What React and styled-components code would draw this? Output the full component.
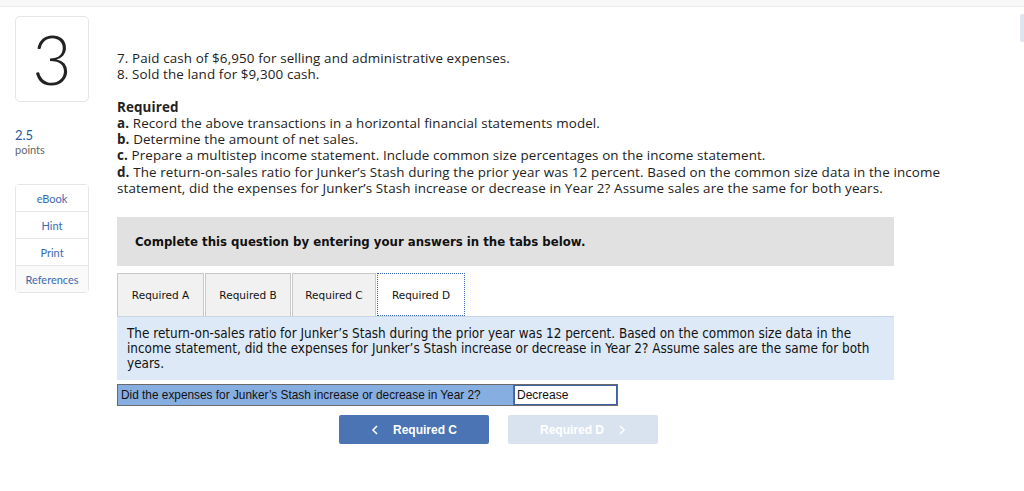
import styled, { createGlobalStyle } from "styled-components";

/* ===== GLOBAL ===== */

const Global = createGlobalStyle`
html, body{
margin:0;
padding:0;
background:#fff;
}
body{
font-family:Lato, "Open Sans", sans-serif;
color:#222;
}
`;

/* ===== PAGE ===== */

const TopStrip = styled.div`
height:6px;
background:#f8f8f8;
border-bottom:1px solid #ececec;
`;

const Page = styled.div`
display:flex;
align-items:flex-start;
padding:9px 0 0 15px;
position:relative;
`;

const ScrollThumb = styled.div`
position:absolute;
right:0;
top:7px;
width:4px;
height:28px;
background:#dfe5ef;
border-radius:2px 0 0 2px;
`;

/* ===== LEFT COLUMN ===== */

const Side = styled.div`
width:74px;
flex-shrink:0;
display:flex;
flex-direction:column;
`;

const NumberBox = styled.div`
height:84px;
border:1px solid #e6e6e6;
border-radius:5px;
display:flex;
align-items:center;
justify-content:center;
font-size:68px;
font-weight:300;
color:#222;
line-height:1;
`;

const Points = styled.div`
margin-top:26px;
font-size:13px;
color:#2a5a9b;
line-height:15px;
`;

const PointsLabel = styled.div`
font-size:11px;
color:#666;
line-height:13px;
`;

const LinkBox = styled.div`
margin-top:28px;
border:1px solid #e6e6e6;
border-radius:4px;
display:flex;
flex-direction:column;
`;

const SideLink = styled.div`
height:26px;
display:flex;
align-items:center;
justify-content:center;
font-size:11px;
color:#3a6bb0;
border-top:${p => (p.$first ? "none" : "1px solid #e6e6e6")};
background:${p => (p.$shade ? "#fafafa" : "#fff")};
`;

/* ===== MAIN COLUMN ===== */

const Main = styled.div`
margin-left:28px;
padding-top:34px;
display:flex;
flex-direction:column;
`;

const Text = styled.div`
font-family:"Open Sans", Lato, sans-serif;
font-size:13.4px;
letter-spacing:0.12px;
line-height:16.3px;
color:#222;
width:900px;
`;

const Gap = styled.div`
height:16px;
`;

const B = styled.b`
font-weight:700;
`;

const Banner = styled.div`
margin-top:21px;
width:777px;
height:49px;
background:#e1e1e1;
display:flex;
align-items:center;
padding-left:18px;
box-sizing:border-box;
font-family:"DejaVu Sans", Verdana, sans-serif;
font-weight:700;
font-size:11.75px;
color:#111;
`;

const Tabs = styled.div`
margin-top:7px;
display:flex;
gap:1px;
align-items:flex-end;
`;

const Tab = styled.div`
width:${p => p.$w}px;
height:43px;
box-sizing:border-box;
display:flex;
align-items:center;
justify-content:center;
font-family:"DejaVu Sans", Verdana, sans-serif;
font-size:10.5px;
color:#111;
background:${p => (p.$active ? "#fff" : "#f1f1f1")};
border:${p => (p.$active ? "1px dotted #3a66b0" : "1px solid #c9c9c9")};
border-bottom:${p => (p.$active ? "1px dotted #3a66b0" : "none")};
`;

const Panel = styled.div`
width:777px;
box-sizing:border-box;
background:#dde9f7;
border-top:1px solid #c9d6e6;
padding:9px 10px 9px 10px;
font-family:"Liberation Sans Narrow", "DejaVu Sans Condensed", "Liberation Sans", sans-serif;
font-size:13.4px;
line-height:15px;
color:#111;
`;

const AnswerRow = styled.div`
margin-top:4px;
display:flex;
width:501px;
height:22px;
box-sizing:border-box;
border:1px solid #6a6a6a;
`;

const AnswerLabel = styled.div`
flex:1;
background:#87aee1;
display:flex;
align-items:center;
padding-left:3px;
font-family:"Liberation Sans", Arial, sans-serif;
font-size:11.85px;
color:#111;
border-right:1px solid #6a6a6a;
`;

const AnswerInput = styled.div`
width:103px;
background:#fff;
display:flex;
align-items:center;
padding-left:2px;
box-sizing:border-box;
border:1px solid #3b63a6;
font-family:"Liberation Sans", Arial, sans-serif;
font-size:12px;
color:#111;
`;

const NavRow = styled.div`
margin-top:9px;
display:flex;
gap:19px;
padding-left:222px;
`;

const NavButton = styled.div`
width:150px;
height:29px;
box-sizing:border-box;
border-radius:2px;
display:flex;
align-items:center;
justify-content:center;
gap:14px;
font-family:"Liberation Sans", Arial, sans-serif;
font-weight:700;
font-size:12px;
color:#fff;
background:${p => (p.$disabled ? "#d9e3f0" : "#4a74b3")};
`;

const Chevron = styled.svg`
width:8px;
height:10px;
`;

/* ===== COMPONENT ===== */

export default function App() {
  return (
    <>
      <Global />
      <TopStrip />
      <Page>
        <ScrollThumb />

        <Side>
          <NumberBox>3</NumberBox>
          <Points>2.5</Points>
          <PointsLabel>points</PointsLabel>
          <LinkBox>
            <SideLink $first>eBook</SideLink>
            <SideLink>Hint</SideLink>
            <SideLink>Print</SideLink>
            <SideLink $shade>References</SideLink>
          </LinkBox>
        </Side>

        <Main>
          <Text>
            7. Paid cash of $6,950 for selling and administrative expenses.
            <br />
            8. Sold the land for $9,300 cash.
          </Text>
          <Gap />
          <Text>
            <B>Required</B>
            <br />
            <B>a.</B> Record the above transactions in a horizontal financial statements model.
            <br />
            <B>b.</B> Determine the amount of net sales.
            <br />
            <B>c.</B> Prepare a multistep income statement. Include common size percentages on the income statement.
            <br />
            <B>d.</B> The return-on-sales ratio for Junker’s Stash during the prior year was 12 percent. Based on the common size data in the income
            <br />
            statement, did the expenses for Junker’s Stash increase or decrease in Year 2? Assume sales are the same for both years.
          </Text>

          <Banner>Complete this question by entering your answers in the tabs below.</Banner>

          <Tabs>
            <Tab $w={87}>Required A</Tab>
            <Tab $w={86}>Required B</Tab>
            <Tab $w={84}>Required C</Tab>
            <Tab $w={88} $active>Required D</Tab>
          </Tabs>

          <Panel>
            The return-on-sales ratio for Junker’s Stash during the prior year was 12 percent. Based on the common size data in the
            <br />
            income statement, did the expenses for Junker’s Stash increase or decrease in Year 2? Assume sales are the same for both
            <br />
            years.
          </Panel>

          <AnswerRow>
            <AnswerLabel>Did the expenses for Junker’s Stash increase or decrease in Year 2?</AnswerLabel>
            <AnswerInput>Decrease</AnswerInput>
          </AnswerRow>

          <NavRow>
            <NavButton>
              <Chevron viewBox="0 0 8 10">
                <path d="M6 1 L2 5 L6 9" fill="none" stroke="#fff" strokeWidth="1.6" />
              </Chevron>
              Required C
            </NavButton>
            <NavButton $disabled>
              Required D
              <Chevron viewBox="0 0 8 10">
                <path d="M2 1 L6 5 L2 9" fill="none" stroke="#fff" strokeWidth="1.6" />
              </Chevron>
            </NavButton>
          </NavRow>
        </Main>
      </Page>
    </>
  );
}
